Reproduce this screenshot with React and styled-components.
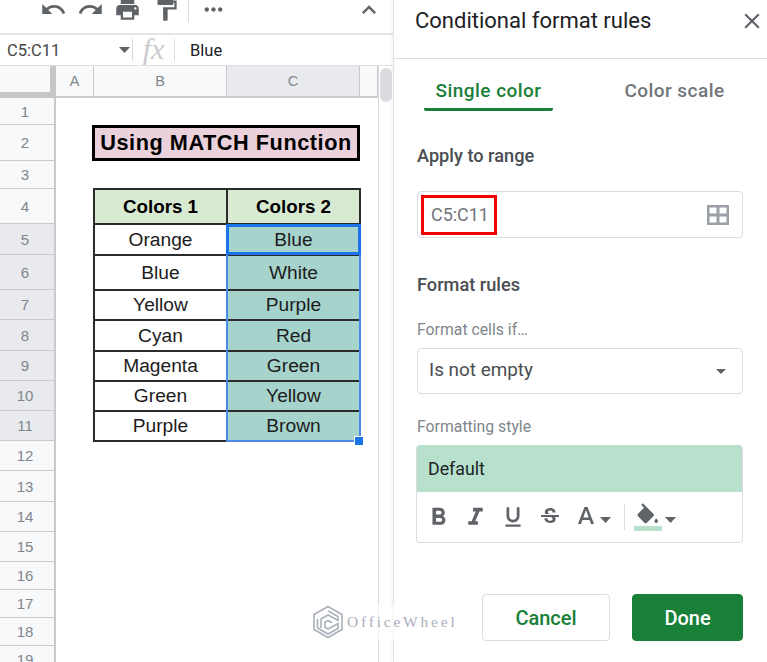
import React from 'react';
import styled, { createGlobalStyle } from 'styled-components';
import {
  MdUndo,
  MdRedo,
  MdPrint,
  MdFormatPaint,
  MdMoreHoriz,
  MdExpandLess,
  MdClose,
  MdArrowDropDown,
  MdFormatBold,
  MdFormatItalic,
  MdFormatUnderlined,
  MdStrikethroughS,
} from 'react-icons/md';

const GlobalStyle = createGlobalStyle`
  html, body {
    margin: 0;
    padding: 0;
    background: #fff;
    overflow: hidden;
  }
  * {
    box-sizing: border-box;
  }
`;

const Page = styled.div`
  display: flex;
  width: 767px;
  height: 662px;
  overflow: hidden;
  position: relative;
  font-family: Roboto, "Liberation Sans", sans-serif;
`;

const Sheet = styled.div`
  width: 393px;
  display: flex;
  flex-direction: column;
  flex-shrink: 0;
`;

const Toolbar = styled.div`
  height: 35px;
  flex-shrink: 0;
  padding-left: 40px;
  display: flex;
  align-items: flex-start;
  color: #5f6368;
  border-bottom: 2px solid #e4e5e7;
  overflow: hidden;
`;

const ToolIcon = styled.span`
  display: block;
  width: ${(p) => p.$w || 37}px;
  height: 22px;
  margin-top: -4px;
  flex-shrink: 0;
  svg {
    display: block;
  }
`;

const ToolDivider = styled.span`
  width: 1px;
  height: 22px;
  background: #dadce0;
  margin: 0 11px 0 8px;
`;

const Collapse = styled.span`
  margin-left: auto;
  margin-right: 10px;
  margin-top: -4px;
  svg {
    display: block;
  }
`;

const FormulaBar = styled.div`
  height: 31px;
  flex-shrink: 0;
  display: flex;
  align-items: center;
  background: #fff;
  font-size: 16.500px;
  color: #3c4043;
  border-bottom: 1px solid #e0e0e0;
`;

const NameBox = styled.div`
  width: 132px;
  height: 100%;
  padding-left: 7px;
  display: flex;
  align-items: center;
  justify-content: space-between;
  color: #444;
  svg {
    color: #5f6368;
    margin-right: 2px;
  }
`;

const FxLabel = styled.div`
  width: 43px;
  height: 22px;
  border-left: 1px solid #dadce0;
  border-right: 1px solid #dadce0;
  text-align: center;
  font: italic 30px/20px "Liberation Serif", serif;
  color: #c9cbce;
`;

const FormulaValue = styled.div`
  padding-left: 15px;
  color: #202124;
`;

const GridRow = styled.div`
  flex: 1;
  display: flex;
  min-height: 0;
  overflow: hidden;
`;

const Cells = styled.div`
  width: 378px;
  flex-shrink: 0;
  display: grid;
  grid-template-columns: 56px 38px 133px 133px 18px;
  grid-template-rows: 32px 27px 36px 28px 35px 31px 35px 30px 31px 30px 30px 30px 30px 31px 30px 30px 28px 28px 28px 28px;
  font-family: "Liberation Sans", Arial, sans-serif;
`;

const Corner = styled.div`
  grid-column: 1;
  grid-row: 1;
  background: #f8f9fa;
  border-right: 6px solid #c6c6c6;
  border-bottom: 6px solid #c6c6c6;
`;

const ColHead = styled.div`
  grid-row: 1;
  grid-column: ${(p) => p.$col};
  display: flex;
  align-items: center;
  justify-content: center;
  font-size: 14.500px;
  color: #80868b;
  background: ${(p) => (p.$active ? '#e8eaed' : '#f8f9fa')};
  border-right: 1px solid #c9cacc;
  border-bottom: 2px solid #c9cacc;
`;

const RowHead = styled.div`
  grid-column: 1;
  grid-row: ${(p) => p.$row + 1};
  display: flex;
  align-items: center;
  justify-content: center;
  padding-right: 4px;
  font-size: 15px;
  color: #80868b;
  background: ${(p) => (p.$active ? '#e8eaed' : '#f8f9fa')};
  border-right: 2px solid #c9cacc;
  border-bottom: 1px solid #c9cacc;
`;

const TitleCell = styled.div`
  grid-column: 3 / 5;
  grid-row: 3;
  margin-left: -2px;
  background: #ead1dc;
  border: 3px solid #000;
  display: flex;
  align-items: center;
  justify-content: center;
  font-size: 21.700px;
  font-weight: 700;
  letter-spacing: 0.55px;
  color: #000;
`;

const Cell = styled.div`
  grid-row: ${(p) => p.$row + 1};
  grid-column: ${(p) => p.$col};
  margin: -1px;
  display: flex;
  align-items: center;
  justify-content: center;
  font-size: ${(p) => (p.$head ? 18.8 : 19.2)}px;
  font-weight: ${(p) => (p.$head ? 700 : 400)};
  color: ${(p) => (p.$head ? '#000' : '#1c1c1c')};
  background: ${(p) => p.$bg};
  border: 2px solid #2b2b2b;
`;

const Selection = styled.div`
  grid-column: 4;
  grid-row: 6 / 13;
  position: relative;
  border: 2px solid #4a8ae8;
  border-width: 0 2px 2px;
  margin: 0 -1px -1px -1px;
  pointer-events: none;
`;

const ActiveCell = styled.div`
  height: 31px;
  margin: 0 -2px;
  border: 3px solid #1a73e8;
`;

const Handle = styled.div`
  position: absolute;
  right: -5px;
  bottom: -6px;
  width: 10px;
  height: 10px;
  background: #1a73e8;
  border: 1px solid #fff;
`;

const ScrollTrack = styled.div`
  flex: 1;
  position: relative;
  border-left: 1px solid #dadce0;
`;

const ScrollThumb = styled.div`
  width: 12px;
  height: 34px;
  margin: 2px 0 0 1px;
  background: #dadce0;
  border-radius: 6px;
`;

const Panel = styled.aside`
  width: 374px;
  flex-shrink: 0;
  border-left: 1px solid #e4e5e7;
  box-shadow: -1px 0 3px rgba(60, 64, 67, 0.08);
  background: #fff;
  color: #3c4043;
`;

const PanelHead = styled.header`
  height: 59px;
  padding: 9px 2px 0 21px;
  display: flex;
  justify-content: space-between;
  align-items: flex-start;
  font-size: 22px;
  line-height: 24px;
  color: #202124;
  border-bottom: 1px solid #dadce0;
  svg {
    color: #5f6368;
    margin-top: -1px;
  }
`;

const Tabs = styled.div`
  display: flex;
  gap: 57px;
  margin: 12px 0 0 30px;
`;

const Tab = styled.div`
  width: 129px;
  height: 40px;
  padding-top: 1px;
  display: flex;
  align-items: center;
  justify-content: center;
  font-size: 19px;
  font-weight: 500;
  letter-spacing: 0.45px;
  white-space: nowrap;
  color: ${(p) => (p.$active ? '#188038' : '#70757a')};
  border-bottom: 3px solid ${(p) => (p.$active ? '#188038' : 'transparent')};
  border-radius: 0 0 2px 2px;
`;

const Form = styled.div`
  padding: 0 24px 0 23px;
`;

const Heading = styled.div`
  margin-top: ${(p) => p.$top}px;
  height: 20px;
  font-size: 18.200px;
  line-height: 20px;
  font-weight: 500;
  color: #4a4d51;
`;

const SmallLabel = styled.div`
  margin-top: ${(p) => p.$top}px;
  height: 20px;
  font-size: 15.800px;
  line-height: 20px;
  color: #80868b;
`;

const RangeInput = styled.div`
  margin-top: 25px;
  height: 47px;
  padding: 0 13px 0 3px;
  display: flex;
  align-items: center;
  justify-content: space-between;
  background: #fff;
  border: 1px solid #dadce0;
  border-radius: 4px;
`;

const Highlight = styled.span`
  width: 76px;
  height: 40px;
  padding-left: 7px;
  display: flex;
  align-items: center;
  font-size: 17.900px;
  color: #70757a;
  border: 3px solid #f40000;
`;

const Select = styled.div`
  margin-top: 8px;
  height: 46px;
  padding: 0 12px 4px 11px;
  display: flex;
  align-items: center;
  justify-content: space-between;
  font-size: 18.900px;
  color: #4a4d51;
  border: 1px solid #dadce0;
  border-radius: 4px;
  svg {
    color: #5f6368;
    margin: 4px -3px 0 0;
  }
`;

const StyleBox = styled.div`
  margin: 8px 0 0 -1px;
  height: 98px;
  border: 1px solid #dadce0;
  border-top: 0;
  border-radius: 4px;
  overflow: hidden;
`;

const Preview = styled.div`
  height: 47px;
  padding-left: 11px;
  display: flex;
  align-items: center;
  background: #b7e1cd;
  font-size: 17.800px;
  color: #202124;
`;

const StyleTools = styled.div`
  height: 50px;
  padding-left: 3px;
  display: flex;
  align-items: center;
  color: #5f6368;
`;

const StyleSlot = styled.span`
  width: ${(p) => p.$w || 37}px;
  display: flex;
  align-items: center;
  justify-content: center;
  flex-shrink: 0;
  margin-top: ${(p) => p.$up || 0}px;
`;

const TextCaret = styled.span`
  width: 13px;
  margin-left: ${(p) => (p.$fill ? 2 : -4)}px;
  display: flex;
  justify-content: center;
  padding-top: 5px;
`;

const ToolSep = styled.span`
  width: 1px;
  height: 26px;
  margin: 0 8px 0 12px;
  background: #dadce0;
`;

const FillWrap = styled.span`
  width: 28px;
  margin-left: 1px;
  display: flex;
  flex-direction: column;
  align-items: center;
`;

const FillBar = styled.span`
  width: 28px;
  height: 5px;
  margin-top: -1px;
  background: #b7e1cd;
`;

const Actions = styled.div`
  margin-top: 51px;
  display: flex;
  justify-content: flex-end;
  gap: 22px;
`;

const Button = styled.div`
  width: ${(p) => p.$w}px;
  height: 47px;
  display: flex;
  align-items: center;
  justify-content: center;
  font-size: 20px;
  font-weight: 500;
  border-radius: 4px;
  color: ${(p) => (p.$primary ? '#fff' : '#188038')};
  background: ${(p) => (p.$primary ? '#188038' : '#fff')};
  border: 1px solid ${(p) => (p.$primary ? '#188038' : '#dadce0')};
`;

const Watermark = styled.div`
  position: absolute;
  left: 308px;
  top: 604px;
  width: 152px;
  height: 36px;
  display: flex;
  align-items: center;
  gap: 3px;
  padding-left: 4px;
  background: rgba(255, 255, 255, 0.6);
  font: 15.500px "Liberation Serif", serif;
  letter-spacing: 2.800px;
  color: #a9afbb;
  svg {
    flex-shrink: 0;
  }
`;

const rowHeads = Array.from({ length: 19 }, (_, i) => i + 1);

const tableRows = [
  ['Orange', 'Blue'],
  ['Blue', 'White'],
  ['Yellow', 'Purple'],
  ['Cyan', 'Red'],
  ['Magenta', 'Green'],
  ['Green', 'Yellow'],
  ['Purple', 'Brown'],
];

const Caret = () => (
  <svg width="11" height="6" viewBox="0 0 11 6">
    <path d="M0 0h11L5.500 6z" fill="#5f6368" />
  </svg>
);

const RangeIcon = () => (
  <svg width="22" height="20" viewBox="0 0 22 20">
    <path
      fill="#9aa0a6"
      d="M0 0h22v20H0zM2.500 2.500v6h7v-6zM12.500 2.500v6h7v-6zM2.500 11.500v6h7v-6zM12.500 11.500v6h7v-6z"
      fillRule="evenodd"
    />
  </svg>
);

const LetterA = () => (
  <svg width="16" height="17" viewBox="0 0 16 17">
    <path fill="#5f6368" d="M6.500 0h3L16 17h-3l-1.400-4H4.400L3 17H0zM5.300 10.500h5.400L8 3z" fillRule="evenodd" />
  </svg>
);

const Bucket = () => (
  <svg width="28" height="24" viewBox="0 0 24 20">
    <path
      fill="#5f6368"
      d="M16.560 8.940 7.620 0 6.210 1.410l2.380 2.380-5.150 5.150c-.59.590-.59 1.540 0 2.120l5.500 5.500c.290.290.680.440 1.060.440s.770-.150 1.060-.440l5.500-5.500c.590-.580.590-1.530 0-2.120zM19 13s-1.500 1.300-1.500 2.300c0 .8.700 1.500 1.500 1.500s1.500-.7 1.500-1.500c0-1-1.500-2.300-1.500-2.300z"
    />
  </svg>
);

const Logo = () => (
  <svg width="32" height="34" viewBox="0 0 32 34" fill="none" stroke="#a9afbb" strokeWidth="1.6">
    <path d="M16 1.500 30 9.500v15L16 32.500 2 24.500v-15z" />
    <path d="M16 6 26 11.500v4L16 10 9 14v9" />
    <path d="M5.500 14v9L16 29l10-5.500v-5L16 24l-3-1.700v-5L16 15.500l4 2.300" />
  </svg>
);

const App = () => {
  return (
    <>
      <GlobalStyle />
      <Page>
        <Sheet>
          <Toolbar>
            <ToolIcon><MdUndo size={27} /></ToolIcon>
            <ToolIcon><MdRedo size={27} /></ToolIcon>
            <ToolIcon $w={39}><MdPrint size={27} /></ToolIcon>
            <ToolIcon $w={27}><MdFormatPaint size={27} /></ToolIcon>
            <ToolDivider />
            <ToolIcon><MdMoreHoriz size={27} /></ToolIcon>
            <Collapse><MdExpandLess size={28} /></Collapse>
          </Toolbar>
          <FormulaBar>
            <NameBox>
              C5:C11
              <Caret />
            </NameBox>
            <FxLabel>fx</FxLabel>
            <FormulaValue>Blue</FormulaValue>
          </FormulaBar>
          <GridRow>
            <Cells>
              <Corner />
              <ColHead $col={2}>A</ColHead>
              <ColHead $col={3}>B</ColHead>
              <ColHead $col={4} $active>C</ColHead>
              <ColHead $col={5} />
              {rowHeads.map((n) => (
                <RowHead key={n} $row={n} $active={n >= 5 && n <= 11}>{n}</RowHead>
              ))}
              <TitleCell>Using MATCH Function</TitleCell>
              <Cell $row={4} $col={3} $head $bg="#d9ead3">Colors 1</Cell>
              <Cell $row={4} $col={4} $head $bg="#d9ead3">Colors 2</Cell>
              {tableRows.map(([a, b], i) => (
                <React.Fragment key={a}>
                  <Cell $row={i + 5} $col={3} $bg="#fff">{a}</Cell>
                  <Cell $row={i + 5} $col={4} $bg="#a7d3cd">{b}</Cell>
                </React.Fragment>
              ))}
              <Selection>
                <ActiveCell />
                <Handle />
              </Selection>
            </Cells>
            <ScrollTrack>
              <ScrollThumb />
            </ScrollTrack>
          </GridRow>
        </Sheet>

        <Panel>
          <PanelHead>
            Conditional format rules
            <MdClose size={26} />
          </PanelHead>
          <Tabs>
            <Tab $active>Single color</Tab>
            <Tab>Color scale</Tab>
          </Tabs>
          <Form>
            <Heading $top={35}>Apply to range</Heading>
            <RangeInput>
              <Highlight>C5:C11</Highlight>
              <RangeIcon />
            </RangeInput>
            <Heading $top={37}>Format rules</Heading>
            <SmallLabel $top={25}>Format cells if…</SmallLabel>
            <Select>
              Is not empty
              <MdArrowDropDown size={24} />
            </Select>
            <SmallLabel $top={23}>Formatting style</SmallLabel>
            <StyleBox>
              <Preview>Default</Preview>
              <StyleTools>
                <StyleSlot><MdFormatBold size={29} /></StyleSlot>
                <StyleSlot><MdFormatItalic size={29} /></StyleSlot>
                <StyleSlot><MdFormatUnderlined size={26} /></StyleSlot>
                <StyleSlot><MdStrikethroughS size={24} /></StyleSlot>
                <StyleSlot $w={35} $up={-4}><LetterA /></StyleSlot>
                <TextCaret><Caret /></TextCaret>
                <ToolSep />
                <FillWrap>
                  <Bucket />
                  <FillBar />
                </FillWrap>
                <TextCaret $fill><Caret /></TextCaret>
              </StyleTools>
            </StyleBox>
            <Actions>
              <Button $w={128}>Cancel</Button>
              <Button $w={111} $primary>Done</Button>
            </Actions>
          </Form>
        </Panel>

        <Watermark>
          <Logo />
          OfficeWheel
        </Watermark>
      </Page>
    </>
  );
};

export default App;
